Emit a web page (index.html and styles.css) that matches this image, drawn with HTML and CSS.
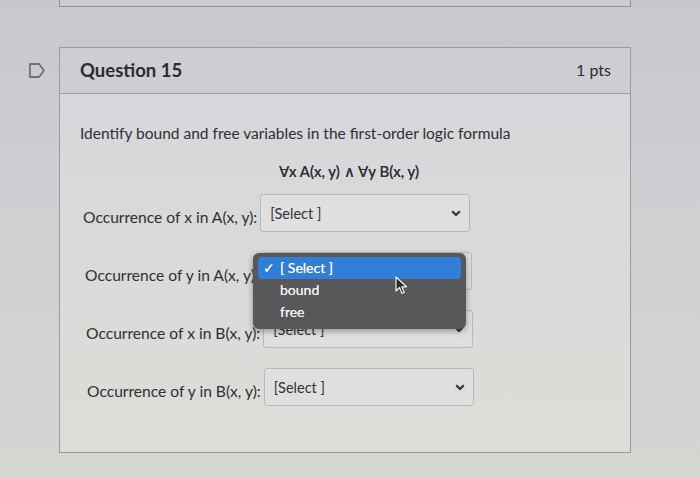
FILE: index.html
```html
<!DOCTYPE html>
<html>
<head>
<meta charset="utf-8">
<link rel="stylesheet" href="styles.css">
</head>
<body>
<div class="page">
  <div class="prev-card"></div>
  <div class="quiz-row">
    <div class="flag">
      <svg width="18" height="17" viewBox="0 0 18 17"><path d="M2 2 H11 L16 8.5 L11 15 H2 Z" fill="none" stroke="#707075" stroke-width="1.8" stroke-linejoin="round"/></svg>
    </div>
    <div class="card">
      <div class="card-header">
        <span class="q-name">Question 15</span>
        <span class="q-pts">1 pts</span>
      </div>
      <div class="card-body">
        <p class="q-text">Identify bound and free variables in the first-order logic formula</p>
        <p class="formula">∀x A(x, y) ∧ ∀y B(x, y)</p>
        <div class="answers">
          <div class="answer">
            <span class="label">Occurrence of x in A(x, y):</span>
            <div class="select"><span>[Select ]</span><svg class="chev" width="10" height="7" viewBox="0 0 10 7"><path d="M1.2 1.2 L5 5 L8.8 1.2" fill="none" stroke="#333" stroke-width="2.2"/></svg></div>
          </div>
          <div class="answer">
            <span class="label">Occurrence of y in A(x, y):</span>
            <div class="select"><span>[Select ]</span><svg class="chev" width="10" height="7" viewBox="0 0 10 7"><path d="M1.2 1.2 L5 5 L8.8 1.2" fill="none" stroke="#333" stroke-width="2.2"/></svg></div>
          </div>
          <div class="answer">
            <span class="label">Occurrence of x in B(x, y):</span>
            <div class="select"><span>[Select ]</span><svg class="chev" width="10" height="7" viewBox="0 0 10 7"><path d="M1.2 1.2 L5 5 L8.8 1.2" fill="none" stroke="#333" stroke-width="2.2"/></svg></div>
          </div>
          <div class="answer">
            <span class="label">Occurrence of y in B(x, y):</span>
            <div class="select"><span>[Select ]</span><svg class="chev" width="10" height="7" viewBox="0 0 10 7"><path d="M1.2 1.2 L5 5 L8.8 1.2" fill="none" stroke="#333" stroke-width="2.2"/></svg></div>
          </div>
        </div>
      </div>
    </div>
  </div>
</div>
<div class="menu">
  <div class="opt active"><span class="check">✓</span>[ Select ]</div>
  <div class="opt">bound</div>
  <div class="opt">free</div>
</div>
<svg class="cursor" width="14" height="20" viewBox="0 0 14 20"><path d="M1 1 L1 15 L4.5 11.5 L7 17.5 L9.3 16.5 L6.8 10.8 L11.5 10.8 Z" fill="#2a2a2a" stroke="#f2f2f2" stroke-width="1.2" stroke-linejoin="round"/></svg>
</body>
</html>
```

FILE: styles.css
```css
html, body {
  margin: 0;
  padding: 0;
}
body {
  width: 700px;
  height: 477px;
  overflow: hidden;
  position: relative;
  font-family: Lato, "Open Sans", "Liberation Sans", sans-serif;
  color: #2e3033;
  background: linear-gradient(180deg, #c9c7cd 0%, #cfced2 40%, #d5d6d2 100%);
}
.prev-card {
  margin-left: 59px;
  width: 572px;
  height: 7px;
  box-sizing: border-box;
  border: 1px solid #8f8e94;
  border-top: none;
  background: #cdccd1;
}
.quiz-row {
  display: flex;
  margin-top: 40px;
}
.flag {
  width: 59px;
  box-sizing: border-box;
  padding: 15px 0 0 28px;
}
.flag svg {
  display: block;
}
.card {
  width: 572px;
  box-sizing: border-box;
  border: 1px solid #9a999e;
  height: 406px;
  display: flex;
  flex-direction: column;
}
.card-header {
  height: 43px;
  flex: none;
  background: #cecdd2;
  border-bottom: 1px solid #9f9ea3;
  display: flex;
  align-items: center;
  justify-content: space-between;
  padding: 0 19px 2px 20px;
}
.q-name {
  font-size: 18.5px;
  font-weight: 700;
  color: #2a2c30;
}
.q-pts {
  font-size: 16px;
  font-weight: 400;
  color: #2a2c30;
}
.card-body {
  flex: 1;
  background: linear-gradient(180deg, #d7d6da 0%, #dadad9 50%, #dcdcd8 100%);
  padding: 30px 20px 0 20px;
}
.q-text {
  margin: 0;
  font-size: 15.5px;
  line-height: 18px;
}
.formula {
  margin: 20px 0 0 0;
  text-align: center;
  font-size: 15px;
  line-height: 18px;
  padding-left: 8px;
  text-shadow: 0 0 0.4px #2e3033;
}
.answers {
  margin-top: 14px;
  display: flex;
  flex-direction: column;
  gap: 20px;
  padding-left: 3px;
}
.answer {
  display: flex;
  align-items: center;
  gap: 3px;
}
.answer:nth-child(2) { padding-left: 2px; }
.answer:nth-child(3) { padding-left: 3px; }
.answer:nth-child(4) { padding-left: 4px; }
.label {
  font-size: 15.6px;
  padding-top: 7px;
}
.select {
  width: 210px;
  height: 38px;
  box-sizing: border-box;
  border: 1px solid #b9b8bc;
  border-radius: 3px;
  background: #dfdfe0;
  display: flex;
  align-items: center;
  justify-content: space-between;
  padding: 0 8px 0 9px;
  font-size: 14.5px;
  color: #333;
}
.chev {
  display: block;
}
.menu {
  position: absolute;
  left: 253px;
  top: 253px;
  width: 213px;
  height: 76px;
  box-sizing: border-box;
  background: #58585a;
  border-radius: 6px;
  box-shadow: 0 2px 6px rgba(0,0,0,0.35);
  padding: 4px 5px;
  font-size: 14px;
  font-weight: 400;
  color: #f1f1f1;
  text-shadow: 0 0 0.6px #f1f1f1;
}
.opt {
  height: 22px;
  line-height: 22px;
  padding-left: 22px;
  position: relative;
}
.opt.active {
  background: #2f7fd9;
  border-radius: 4px;
  color: #fff;
}
.check {
  position: absolute;
  left: 5px;
  top: 0;
}
.cursor {
  position: absolute;
  left: 395px;
  top: 276px;
}
```
